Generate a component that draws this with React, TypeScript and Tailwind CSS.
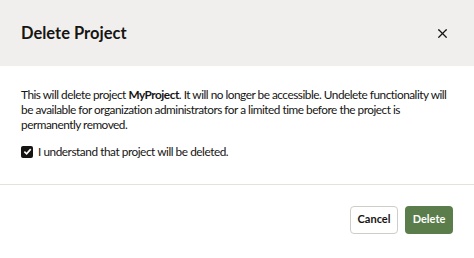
import { X } from "lucide-react";

export default function App() {
  return (
    <div
      className="w-[474px] h-[258px] bg-white flex flex-col text-[#161513]"
      style={{ fontFamily: 'Lato, "Liberation Sans", sans-serif' }}
    >
      <div className="h-[66px] bg-[#f1efed] flex items-center justify-between pl-[21px] pr-[20px] shrink-0">
        <h2 className="text-[16.5px] font-bold leading-none">Delete Project</h2>
        <button className="w-6 h-6 flex items-center justify-center">
          <X size={15} strokeWidth={2} />
        </button>
      </div>
      <div className="px-[21px] pt-[21px] pb-[23px] border-b border-[#e4e2df]">
        <p className="text-[11.8px] leading-[15px] tracking-[-0.48px] whitespace-nowrap">
          This will delete project <b>MyProject</b>. It will no longer be accessible. Undelete
          functionality will
          <br />
          be available for organization administrators for a limited time before the project is
          <br />
          permanently removed.
        </p>
        <label className="flex items-center gap-[5px] mt-[11px] text-[11.8px] tracking-[-0.45px]">
          <span className="w-[12px] h-[12px] bg-[#161513] rounded-[2px] flex items-center justify-center">
            <svg width="9" height="9" viewBox="0 0 10 10">
              <path d="M1.5 5.2 L4 7.6 L8.6 2.4" stroke="white" strokeWidth="1.8" fill="none" />
            </svg>
          </span>
          I understand that project will be deleted.
        </label>
      </div>
      <div className="flex justify-end gap-[7px] pt-[21px] pr-[21px]">
        <button className="w-[48px] h-[28px] rounded-[4px] border border-[#cfcdca] bg-white text-[11px] font-bold">
          Cancel
        </button>
        <button className="w-[48px] h-[28px] rounded-[4px] bg-[#5b7d4b] text-white text-[11px] font-bold">
          Delete
        </button>
      </div>
    </div>
  );
}
